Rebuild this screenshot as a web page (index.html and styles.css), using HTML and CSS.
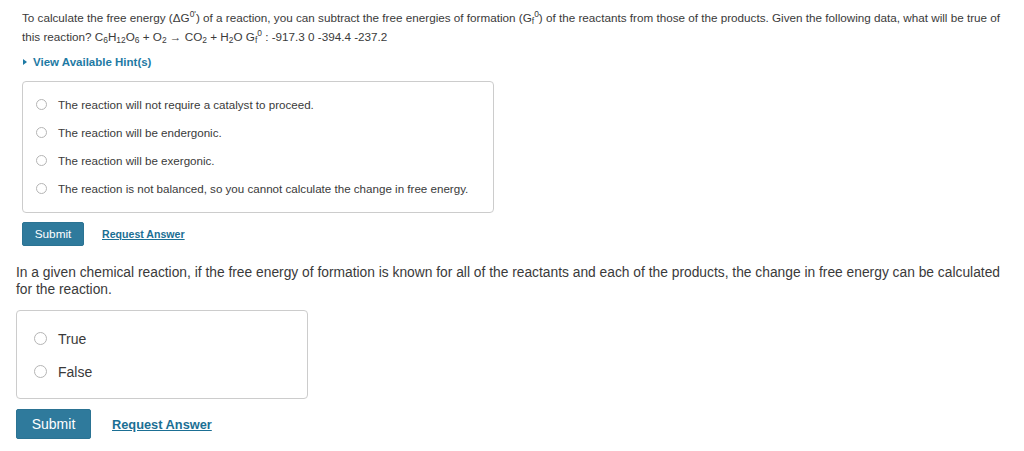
FILE: index.html
```html
<!DOCTYPE html>
<html>
<head>
<meta charset="utf-8">
<link rel="stylesheet" href="styles.css">
</head>
<body>
<section class="q q-small">
  <p class="prompt">To calculate the free energy (&Delta;G<sup>0'</sup>) of a reaction, you can subtract the free energies of formation (G<sub>f</sub><sup>0</sup>) of the reactants from those of the products. Given the following data, what will be true of this reaction? C<sub>6</sub>H<sub>12</sub>O<sub>6</sub> + O<sub>2</sub> &rarr; CO<sub>2</sub> + H<sub>2</sub>O G<sub>f</sub><sup>0</sup> : -917.3 0 -394.4 -237.2</p>
  <div class="hint"><span class="tri"></span>View Available Hint(s)</div>
  <div class="choices">
    <label class="choice"><span class="radio"></span>The reaction will not require a catalyst to proceed.</label>
    <label class="choice"><span class="radio"></span>The reaction will be endergonic.</label>
    <label class="choice"><span class="radio"></span>The reaction will be exergonic.</label>
    <label class="choice"><span class="radio"></span>The reaction is not balanced, so you cannot calculate the change in free energy.</label>
  </div>
  <div class="actions">
    <button class="submit">Submit</button>
    <a class="req">Request Answer</a>
  </div>
</section>
<section class="q q-large">
  <p class="prompt">In a given chemical reaction, if the free energy of formation is known for all of the reactants and each of the products, the change in free energy can be calculated for the reaction.</p>
  <div class="choices">
    <label class="choice"><span class="radio"></span>True</label>
    <label class="choice"><span class="radio"></span>False</label>
  </div>
  <div class="actions">
    <button class="submit">Submit</button>
    <a class="req">Request Answer</a>
  </div>
</section>
</body>
</html>
```
FILE: styles.css
```css
* { box-sizing: border-box; }
html, body { margin: 0; padding: 0; background: #fff; }
body {
  font-family: "Liberation Sans", Arial, sans-serif;
  color: #3a3a3a;
  width: 1024px;
  height: 451px;
  overflow: hidden;
}
.prompt { margin: 0; }
.prompt sub, .prompt sup { line-height: 0; font-size: 72%; }
.prompt sub { vertical-align: -2px; }
.prompt sup { vertical-align: 5px; }
.choices {
  border: 1px solid #ccc;
  border-radius: 4px;
  display: flex;
  flex-direction: column;
}
.choice { display: flex; align-items: center; }
.radio {
  display: inline-block;
  border: 1px solid #b5b5b5;
  border-radius: 50%;
  background: #fff;
  flex: none;
}
.actions { display: flex; align-items: center; }
.submit {
  background: #2f7a9c;
  color: #fff;
  border: 1px solid #2b7393;
  border-radius: 2px;
  font-family: "Liberation Sans", Arial, sans-serif;
  padding: 0;
}
.req {
  color: #1b6f94;
  font-weight: bold;
  text-decoration: underline;
}

/* small (top) question */
.q-small { padding: 8px 0 0 22px; }
.q-small .prompt { font-size: 11.7px; line-height: 19px; width: 990px; }
.q-small .hint {
  margin-top: 9px;
  height: 14px;
  line-height: 14px;
  font-size: 11.5px;
  font-weight: bold;
  color: #1e7aa4;
  display: flex;
  align-items: center;
}
.q-small .tri {
  width: 0; height: 0;
  border-left: 4px solid #1e7aa4;
  border-top: 3px solid transparent;
  border-bottom: 3px solid transparent;
  margin: 0 6px 0 1px;
}
.q-small .choices { margin-top: 12px; width: 472px; padding: 8px 0 10px 13px; }
.q-small .choice { height: 28px; font-size: 11.6px; }
.q-small .radio { width: 11px; height: 11px; margin-right: 11px; }
.q-small .actions { margin-top: 9px; }
.q-small .submit { width: 62px; height: 24px; font-size: 11.8px; }
.q-small .req { margin-left: 18px; font-size: 10.6px; }

/* large (bottom) question */
.q-large { padding: 18px 0 0 16px; }
.q-large .prompt { font-size: 13.8px; line-height: 17px; width: 992px; }
.q-large .choices { margin-top: 12px; width: 292px; padding: 11px 0 10px 17px; }
.q-large .choice { height: 33px; font-size: 14px; }
.q-large .radio { width: 13px; height: 13px; margin-right: 11px; }
.q-large .actions { margin-top: 10px; }
.q-large .submit { width: 75px; height: 30px; font-size: 14px; }
.q-large .req { margin-left: 21px; font-size: 12.8px; }
```
